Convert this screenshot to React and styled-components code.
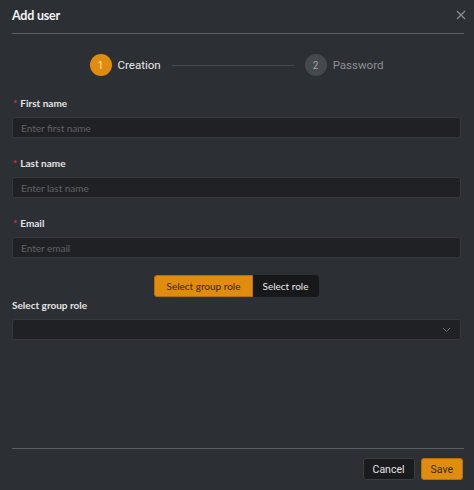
import styled, { createGlobalStyle } from "styled-components";

const GlobalStyle = createGlobalStyle`
  html, body, #root {
    margin: 0;
    height: 100%;
  }
  body {
    background-color: #2c2f33;
    font-family: "Lato", "Liberation Sans", sans-serif;
  }
  * {
    box-sizing: border-box;
  }
`;

const ORANGE = "#e08c0f";

export const Modal = styled.div`
  display: flex;
  flex-direction: column;
  width: 474px;
  height: 490px;
  background-color: #2c2f33;
  color: #e6e6e6;
`;

export const Header = styled.div`
  display: flex;
  align-items: center;
  justify-content: space-between;
  height: 34px;
  margin: 0 10px 0 12px;
  padding-bottom: 2px;
  border-bottom: 1px solid #5a5d61;
`;

export const Title = styled.h2`
  margin: 0;
  font-size: 12.5px;
  font-weight: 700;
  color: #f2f2f2;
  letter-spacing: -0.2px;
`;

export const CloseButton = styled.button`
  display: flex;
  align-items: center;
  justify-content: center;
  width: 10px;
  height: 14px;
  padding: 0;
  margin: -2px -2px 0 0;
  background: transparent;
  border: none;
  color: #8d9094;
  cursor: pointer;
`;

export const Body = styled.div`
  flex: 1;
  display: flex;
  flex-direction: column;
  padding: 20px 13px 0 12px;
`;

export const Stepper = styled.div`
  display: flex;
  align-items: center;
  justify-content: center;
  height: 22px;
  margin-bottom: 19px;
  font-family: "Roboto", "Liberation Sans", sans-serif;
`;

export const Step = styled.div`
  display: flex;
  align-items: center;
  gap: 6px;
  font-size: 11.5px;
  color: ${(p) => (p.$active ? "#e8e8e8" : "#8c8f93")};
`;

export const StepCircle = styled.span`
  display: flex;
  align-items: center;
  justify-content: center;
  width: 22px;
  height: 22px;
  border-radius: 50%;
  font-size: 10px;
  background-color: ${(p) => (p.$active ? ORANGE : "#45484c")};
  color: ${(p) => (p.$active ? "#fbe7c4" : "#a3a6aa")};
`;

export const StepLine = styled.span`
  width: 122px;
  height: 1px;
  margin: 0 11px;
  background-color: #45484c;
`;

export const Field = styled.div`
  display: flex;
  flex-direction: column;
  margin-bottom: ${(p) => p.$gap ?? 17}px;
`;

export const Label = styled.label`
  display: flex;
  align-items: center;
  gap: 3px;
  height: 16px;
  margin-bottom: 6px;
  font-size: 10px;
  font-weight: 700;
  color: #e4e4e4;
`;

export const Required = styled.span`
  color: #c2374a;
  font-size: 10px;
  margin-left: 1px;
`;

export const Input = styled.input`
  width: 100%;
  height: 21px;
  padding: 0 8px;
  font-family: "Lato", "Liberation Sans", sans-serif;
  font-size: 10px;
  background-color: #1f2124;
  border: 1px solid #35383c;
  border-radius: 3px;
  color: #e4e4e4;
  outline: none;

  &::placeholder {
    color: #5f6266;
  }
`;

export const SelectBox = styled.div`
  display: flex;
  align-items: center;
  justify-content: flex-end;
  height: 21px;
  padding: 0 9px;
  background-color: #1f2124;
  border: 1px solid #35383c;
  border-radius: 3px;
  color: #6a6d71;
`;

export const Segmented = styled.div`
  display: flex;
  align-self: center;
  height: 22px;
`;

export const SegmentButton = styled.button`
  height: 22px;
  padding: 0 ${(p) => (p.$active ? 11 : 9)}px;
  font-family: "Lato", "Liberation Sans", sans-serif;
  font-size: 10px;
  border: 1px solid ${(p) => (p.$active ? "#b86f05" : "#17181a")};
  border-radius: ${(p) => (p.$active ? "3px 0 0 3px" : "0 3px 3px 0")};
  background-color: ${(p) => (p.$active ? ORANGE : "#17181a")};
  color: ${(p) => (p.$active ? "#3b2708" : "#ececec")};
  cursor: pointer;
`;

export const Footer = styled.div`
  display: flex;
  justify-content: flex-end;
  gap: 6px;
  margin: 0 10px 0 12px;
  padding: 9px 1px 10px 0;
  border-top: 1px solid #5a5d61;
`;

export const FooterButton = styled.button`
  height: 22px;
  padding: 0 9px;
  font-family: "Roboto", "Liberation Sans", sans-serif;
  font-size: 10.5px;
  border-radius: 3px;
  border: 1px solid ${(p) => (p.$primary ? "#b86f05" : "#3a3d41")};
  background-color: ${(p) => (p.$primary ? ORANGE : "#1a1b1d")};
  color: ${(p) => (p.$primary ? "#3b2708" : "#e2e2e2")};
  cursor: pointer;
`;

const CloseIcon = () => (
  <svg width="10" height="10" viewBox="0 0 10 10">
    <path d="M1 1 L9 9 M9 1 L1 9" stroke="currentColor" strokeWidth="1.2" />
  </svg>
);

const ChevronIcon = () => (
  <svg width="9" height="6" viewBox="0 0 9 6">
    <path d="M1 1 L4.5 4.5 L8 1" stroke="currentColor" strokeWidth="1" fill="none" />
  </svg>
);

const AddUser = () => {
  return (
    <Modal>
      <Header>
        <Title>Add user</Title>
        <CloseButton>
          <CloseIcon />
        </CloseButton>
      </Header>
      <Body>
        <Stepper>
          <Step $active>
            <StepCircle $active>1</StepCircle>
            Creation
          </Step>
          <StepLine />
          <Step>
            <StepCircle>2</StepCircle>
            Password
          </Step>
        </Stepper>

        <Field>
          <Label htmlFor="firstName">
            <Required>*</Required>First name
          </Label>
          <Input id="firstName" placeholder="Enter first name" />
        </Field>
        <Field>
          <Label htmlFor="lastName">
            <Required>*</Required>Last name
          </Label>
          <Input id="lastName" placeholder="Enter last name" />
        </Field>
        <Field>
          <Label htmlFor="email">
            <Required>*</Required>Email
          </Label>
          <Input id="email" placeholder="Enter email" />
        </Field>

        <Segmented>
          <SegmentButton $active>Select group role</SegmentButton>
          <SegmentButton>Select role</SegmentButton>
        </Segmented>

        <Field $gap={0}>
          <Label>Select group role</Label>
          <SelectBox>
            <ChevronIcon />
          </SelectBox>
        </Field>
      </Body>
      <Footer>
        <FooterButton>Cancel</FooterButton>
        <FooterButton $primary>Save</FooterButton>
      </Footer>
    </Modal>
  );
};

export default function App() {
  return (
    <>
      <GlobalStyle />
      <AddUser />
    </>
  );
}
